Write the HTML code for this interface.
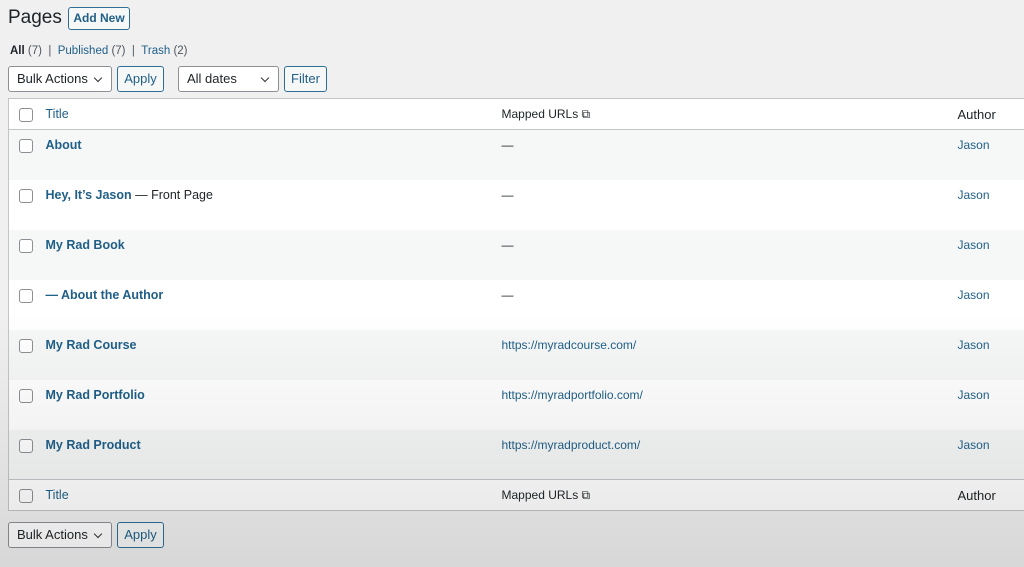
<!DOCTYPE html>
<html><head><style>
*{box-sizing:border-box;margin:0;padding:0}
body{width:1024px;height:567px;overflow:hidden;background:#f0f0f1;font-family:"Liberation Sans",sans-serif;font-size:13px;color:#1d2327;position:relative}
.ov{position:absolute;left:0;top:0;width:1024px;height:567px;background:linear-gradient(to bottom,rgba(0,0,0,0) 55%,rgba(0,0,0,0.1) 100%);pointer-events:none}
a{color:#1f5f88;text-decoration:none}
h1{position:absolute;left:8px;top:7px;font-size:19px;font-weight:400}
.btn{position:absolute;border:1px solid #2f6f96;border-radius:3px;background:#f6f7f7;color:#1f5f88;font-size:13px;text-align:center}
.sel{position:absolute;border:1px solid #8c8f94;border-radius:3px;background:#fff;padding-left:8px;font-size:13px}
.sel::after{content:"";position:absolute;right:10px;top:8px;width:5px;height:5px;border-right:1.5px solid #333;border-bottom:1.5px solid #333;transform:rotate(45deg)}
.sub{position:absolute;left:10px;top:45px;font-size:11.5px;color:#50575e}
table{position:absolute;left:8px;top:98px;width:1030px;border-collapse:collapse;border:1px solid #c3c4c7;background:#fff}
td{vertical-align:top;padding:0}
tr.h td{height:31px;padding-top:8px;border-bottom:1px solid #c3c4c7}
tr.f td{height:31px;padding-top:8px;border-top:1px solid #c3c4c7}
tr.r td{height:50px;padding-top:8px}
tr.s{background:#f6f7f7}
.cb{width:37px;padding-left:10px!important}
.cb span{display:inline-block;width:14px;height:14px;border:1px solid #8c8f94;border-radius:3px;background:#fff;margin-top:1px}
.t{width:456px;font-size:12.5px}
.h .t,.f .t{padding-left:-2px}
.t b a{font-weight:700}
.m{width:456px;font-size:12px}
.au{font-size:12px}
</style></head><body>
<h1>Pages</h1>
<div class="btn" style="left:68px;top:7px;width:62px;height:23px;line-height:21px;font-weight:700;font-size:12px">Add New</div>
<div class="sub"><b style="color:#1d2327">All</b> (7) &nbsp;| &nbsp;<a>Published</a> (7) &nbsp;| &nbsp;<a>Trash</a> (2)</div>
<div class="sel" style="left:8px;top:66px;width:104px;height:26px;line-height:24px">Bulk Actions</div>
<div class="btn" style="left:117px;top:66px;width:47px;height:26px;line-height:24px">Apply</div>
<div class="sel" style="left:178px;top:66px;width:101px;height:26px;line-height:24px">All dates</div>
<div class="btn" style="left:284px;top:66px;width:43px;height:26px;line-height:24px">Filter</div>
<table>
<tr class="h"><td class="cb"><span></span></td><td class="t"><a>Title</a></td><td class="m">Mapped URLs ⧉</td><td>Author</td></tr>
<tr class="r s"><td class="cb"><span></span></td><td class="t"><b><a>About</a></b></td><td class="m">—</td><td class="au"><a>Jason</a></td></tr>
<tr class="r"><td class="cb"><span></span></td><td class="t"><b><a>Hey, It’s Jason</a></b> — Front Page</td><td class="m">—</td><td class="au"><a>Jason</a></td></tr>
<tr class="r s"><td class="cb"><span></span></td><td class="t"><b><a>My Rad Book</a></b></td><td class="m">—</td><td class="au"><a>Jason</a></td></tr>
<tr class="r"><td class="cb"><span></span></td><td class="t"><b><a>— About the Author</a></b></td><td class="m">—</td><td class="au"><a>Jason</a></td></tr>
<tr class="r s"><td class="cb"><span></span></td><td class="t"><b><a>My Rad Course</a></b></td><td class="m"><a>https://myradcourse.com/</a></td><td class="au"><a>Jason</a></td></tr>
<tr class="r"><td class="cb"><span></span></td><td class="t"><b><a>My Rad Portfolio</a></b></td><td class="m"><a>https://myradportfolio.com/</a></td><td class="au"><a>Jason</a></td></tr>
<tr class="r s"><td class="cb"><span></span></td><td class="t"><b><a>My Rad Product</a></b></td><td class="m"><a>https://myradproduct.com/</a></td><td class="au"><a>Jason</a></td></tr>
<tr class="f"><td class="cb"><span></span></td><td class="t"><a>Title</a></td><td class="m">Mapped URLs ⧉</td><td>Author</td></tr>
</table>
<div class="sel" style="left:8px;top:522px;width:104px;height:26px;line-height:24px">Bulk Actions</div>
<div class="btn" style="left:117px;top:522px;width:47px;height:26px;line-height:24px">Apply</div>
<div class="ov"></div>
</body></html>
